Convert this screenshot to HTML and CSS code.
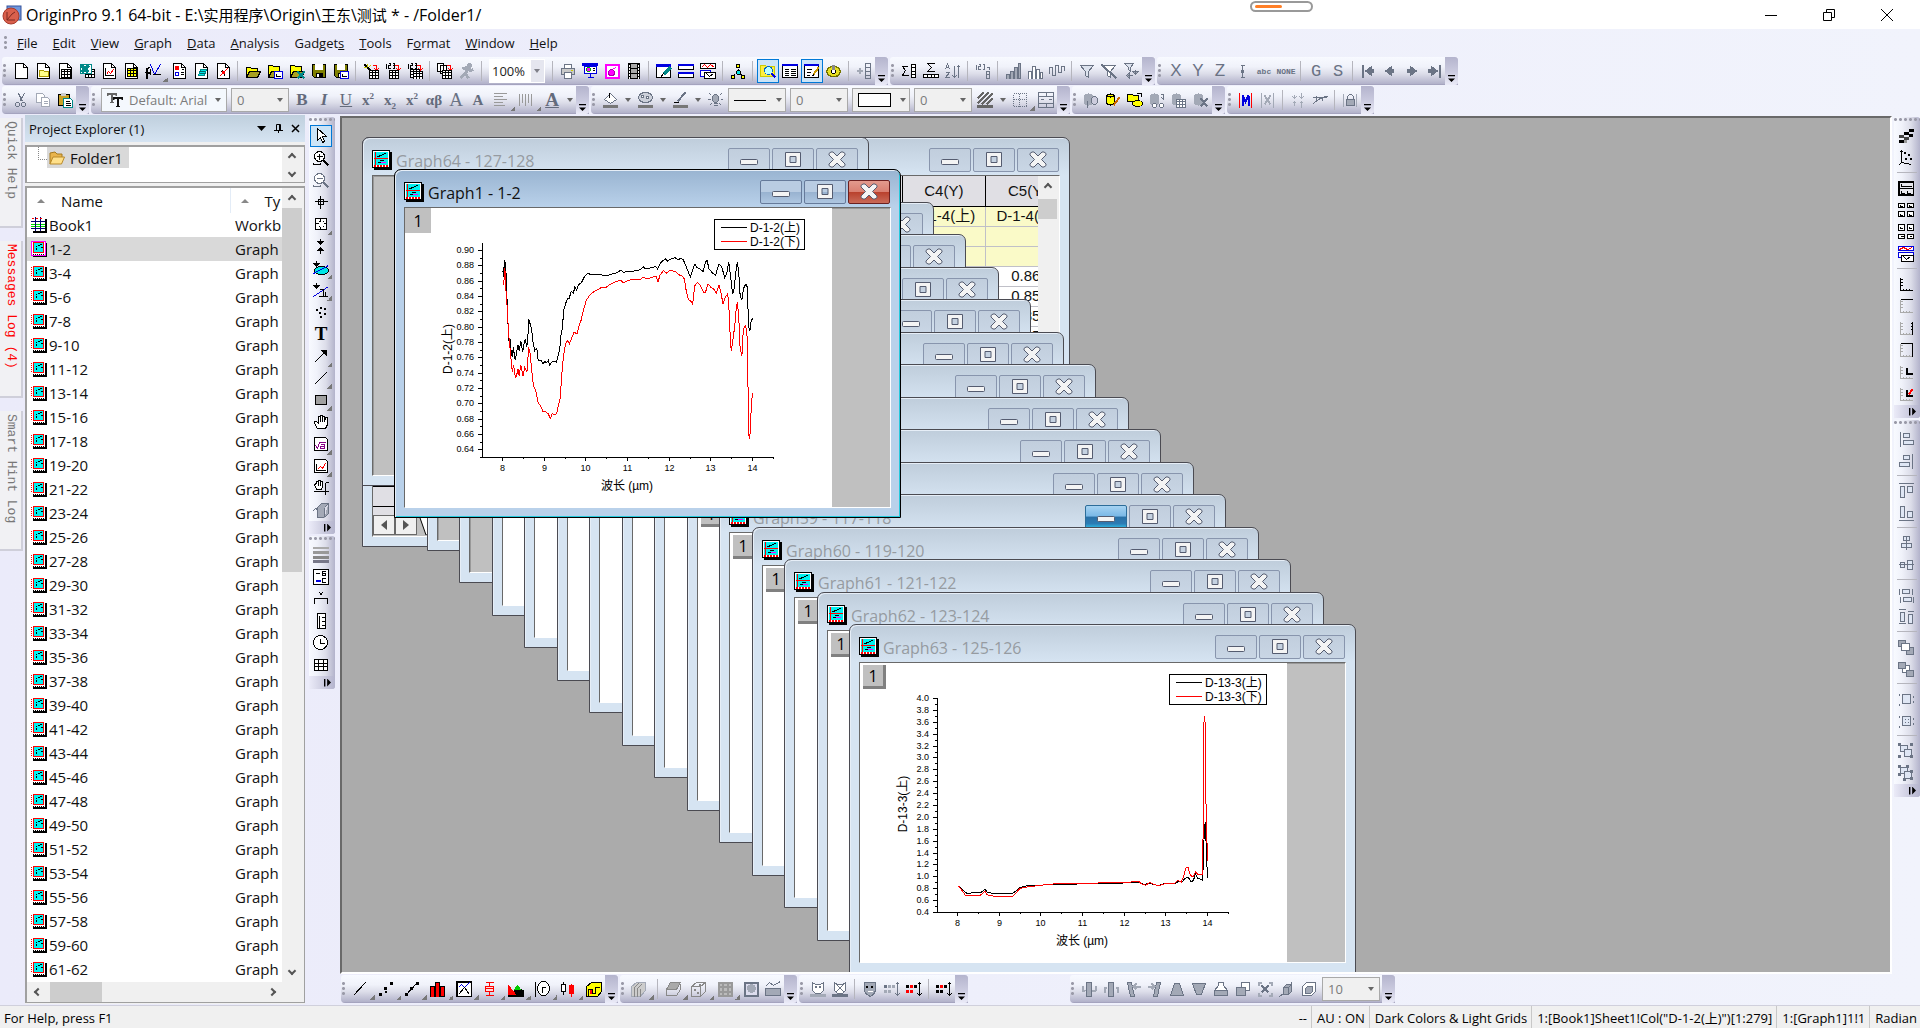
FILE: index.html
```html
<!DOCTYPE html>
<html lang="en">
<head>
<meta charset="utf-8">
<title>OriginPro 9.1 64-bit</title>
<link rel="stylesheet" href="styles.css">
</head>
<body>
<header class="titlebar">
  <svg class="app-icon" viewBox="0 0 20 20" width="20" height="20" aria-hidden="true">
    <rect x="5" y="1" width="14" height="14" fill="#6f97dc" stroke="#35539b"/>
    <circle cx="9" cy="11" r="8" fill="#d9604c" stroke="#a83a2c"/>
    <path d="M5 15L10 9L13 7M5 7V15H13" stroke="#7c2a22" fill="none"/>
  </svg>
  <h1>OriginPro 9.1 64-bit - E:\<span class="cjk">实用程序</span>\Origin\<span class="cjk">王东</span>\<span class="cjk">测试</span> * - /Folder1/</h1>
  <div class="pill"><i></i></div>
  <div class="sys">
    <button aria-label="Minimize"><svg viewBox="0 0 12 12"><path d="M0 6.5H12"/></svg></button>
    <button aria-label="Restore"><svg viewBox="0 0 12 12"><path d="M.5 3.5H8.500V11.500H.5ZM3.500 3V.5H11.500V8.500H9"/></svg></button>
    <button aria-label="Close"><svg viewBox="0 0 12 12"><path d="M0 0L12 12M12 0L0 12"/></svg></button>
  </div>
</header>
<nav class="menubar">
  <span class="grip"></span>
  <button><u>F</u>ile</button><button><u>E</u>dit</button><button><u>V</u>iew</button><button><u>G</u>raph</button><button><u>D</u>ata</button><button><u>A</u>nalysis</button><button>Gadget<u>s</u></button><button><u>T</u>ools</button><button>F<u>o</u>rmat</button><button><u>W</u>indow</button><button><u>H</u>elp</button>
</nav>
<div class="bar-row" id="row-standard"></div>
<div class="bar-row" id="row-format"></div>
<main>
  <div class="side-tabs">
    <button>Quick Help</button>
    <button class="alert">Messages Log (4)</button>
    <button>Smart Hint Log</button>
  </div>
  <aside class="explorer">
    <header>
      <h2>Project Explorer (1)</h2>
      <button aria-label="Menu"><svg viewBox="0 0 9 9"><path d="M0 2H9L4.500 7Z" fill="#000"/></svg></button>
      <button aria-label="Pin"><svg viewBox="0 0 9 9"><path d="M2.500 6V.5H6.500V6M5.500 1V6M0 6.500H9M4.500 7V9" stroke="#000" fill="none"/></svg></button>
      <button aria-label="Close"><svg viewBox="0 0 9 9"><path d="M1 1L8 8M8 1L1 8" stroke="#000" stroke-width="1.500" fill="none"/></svg></button>
    </header>
    <div class="box tree">
      <div class="tree-body">
        <span class="branch"></span>
        <button class="node"><svg viewBox="0 0 16 14" width="16" height="14"><path d="M1 13V2L6 1L8 3H13V6" fill="#e9b44c" stroke="#a67a1e"/><path d="M1 13L4 6H15.500L12.500 13Z" fill="#ffe08a" stroke="#b98a2a"/></svg>Folder1</button>
      </div>
      <div class="vscroll"><span class="up"></span><span class="down"></span></div>
    </div>
    <div class="box list">
      <div class="list-body">
        <table>
          <thead><tr><th><i></i>Name</th><th><i></i>Ty</th></tr></thead>
          <tbody id="files"></tbody>
        </table>
        <div class="vscroll"><span class="up"></span><div class="track"><div class="thumb"></div></div><span class="down"></span></div>
      </div>
      <div class="hscroll"><span class="left"></span><div class="thumb"></div><span class="right"></span></div>
    </div>
  </aside>
  <div class="dock" id="dock-tools"></div>
  <div class="work">
    <div class="work-top">
      <div class="mdi" id="mdi"></div>
      <div class="dock dock-right" id="dock-right"></div>
    </div>
    <div class="bar-row" id="row-plot"></div>
  </div>
</main>
<footer class="status">
  <span class="msg">For Help, press F1</span>
  <span>--</span><span>AU : ON</span><span>Dark Colors &amp; Light Grids</span><span>1:[Book1]Sheet1!Col("D-1-2(上)")[1:279]</span><span>1:[Graph1]1!1</span><span>Radian</span>
</footer>
<script src="icons.js"></script>
<script src="app.js"></script>
</body>
</html>
```
FILE: styles.css
```css
* { box-sizing: border-box; }
body {
  margin: 0; height: 100vh; display: flex; flex-direction: column; overflow: hidden;
  font: 13px/18px "Open Sans", "Noto Sans CJK SC", sans-serif; color: #111;
  background: linear-gradient(90deg, #ebebfa, #f1f3fc);
}
button { font: inherit; color: inherit; background: none; border: 0; padding: 0; margin: 0; }
svg { display: block; flex: none; }
h1, h2, h3 { margin: 0; font-weight: 400; }

.titlebar { flex: none; height: 29px; background: #fff; display: flex; align-items: center; padding-left: 2px; }
.titlebar h1 { font-size: 16px; line-height: 24px; margin-left: 4px; flex: 1; white-space: nowrap; color: #000; }
.titlebar .cjk { font-size: 15px; font-family: "Noto Sans CJK SC", sans-serif; }
.pill { width: 63px; height: 11px; border: 2px solid #999; border-radius: 6px; margin-right: 429px; align-self: flex-start; margin-top: 1px; padding: 2px 3px; background: #fff; }
.pill i { display: block; width: 27px; height: 3px; border-radius: 2px; background: #ff7f27; }
.sys { display: flex; padding-right: 4px; }
.sys button { width: 58px; height: 28px; display: grid; place-items: center; }
.sys svg { width: 12px; height: 12px; fill: none; stroke: #000; }

.menubar { flex: none; height: 28px; display: flex; align-items: center; padding-left: 3px; gap: 15px; }
.menubar button { line-height: 24px; }
.menubar .grip { margin-right: -9px; }

.grip { flex: none; width: 8px; align-self: stretch; background: radial-gradient(circle at 50% 50%, #9a9aa8 1px, transparent 2px) 0 6px / 5px 5px repeat-y; background-clip: content-box; padding: 6px 0; }
.bar-row { flex: none; height: 29px; display: flex; gap: 2px; padding-left: 2px; }
.toolbar { display: flex; align-items: center; height: 28px; border-radius: 3px 0 0 4px; background: linear-gradient(#f8faff, #f0f2fa 35%, #dcdde9 60%, #b3b3cb 95%, #9d9bb8); }
.toolbar button { flex: none; width: 22px; height: 24px; display: grid; place-items: center; color: #6a7284; }
.toolbar button svg { width: 16px; height: 16px; shape-rendering: crispEdges; }
.toolbar button.on, .dock button.on { background: #cce4f7; border: 1px solid #0078d7; }
.toolbar button.corner { width: 26px; padding-right: 4px; background: linear-gradient(135deg, transparent 50%, #777 50%) 21px 18px / 5px 5px no-repeat; }
.toolbar button.arrow { width: 13px; }
.toolbar button.arrow::before, .combo::after { content: ""; border: 3px solid transparent; border-top: 4px solid #666; border-bottom: 0; }
.toolbar .end { flex: none; align-self: stretch; width: 13px; background: linear-gradient(#b4b4cd, #c9c9de 50%, #ebebf8); border-radius: 0 3px 3px 0; display: grid; place-items: end center; padding-bottom: 3px; }
.toolbar .end::before { content: ""; width: 7px; height: 7px; clip-path: polygon(0 0, 100% 0, 100% 17%, 0 17%, 0 50%, 100% 50%, 50% 100%, 0 50%); background: #000; }
.sep { flex: none; width: 1px; height: 20px; margin: 0 4px 0 3px; background: #b5b5bd; }
.combo { flex: none; display: flex; align-items: center; height: 24px; margin: 0 2px; padding: 0 5px; background: #f0f0f0; border: 1px solid #a9a9a9; color: #7b7b7b; gap: 4px; width: 58px; position: relative; }
.combo select { appearance: none; font: inherit; color: inherit; background: none; border: 0; padding: 0; margin: 0; min-width: 0; flex: 1; width: 0; outline: 0; }
.combo.font { width: 126px; background: #f4f8fd; gap: 6px; }
.combo.zoom { width: 56px; background: #fff; border-color: #fff; color: #222; margin: 0 4px 0 3px; padding: 0 0 0 2px; gap: 0; }
.combo.zoom::after { margin: 0 4px; border-top-color: #000; }
.combo.zoom::before { content: ""; position: absolute; right: 0; top: 0; bottom: 0; width: 13px; background: #d4d5e4; opacity: 0.600; }
.bold { font: 700 17px "Liberation Serif", serif; }
.ital { font: italic 700 17px "Liberation Serif", serif; }
.undl { font: 17px "Liberation Serif", serif; text-decoration: underline; }
.serif { font: 700 15px "Liberation Serif", serif; }
.big { font: 700 19px "Liberation Serif", serif; }
.large { font: 19px "Liberation Serif", serif; }
.axis { font: 17px "Liberation Sans", sans-serif; }
.mono { font: 17px "Liberation Mono", monospace; }
.tiny { font: 700 8px "Liberation Mono", monospace; }
.toolbar button.big, .toolbar button.bold, .toolbar button.ital, .toolbar button.undl, .toolbar button.serif { color: #646b7c; }
.toolbar button.text-tool { color: #000; }
.toolbar sup, .toolbar sub { font-size: 9px; line-height: 0; }
.push { margin-left: 100px; }

main { flex: 1; min-height: 0; display: flex; }
.side-tabs { flex: none; width: 25px; padding-top: 3px; display: flex; flex-direction: column; align-items: flex-start; gap: 13px; }
.side-tabs button { writing-mode: vertical-rl; width: 23px; height: 110px; padding: 3px 0; text-align: left; line-height: 18px; background: #f1f1f4; border: solid #cfcfda; border-width: 0 2px 2px 0; font-family: "Liberation Mono", monospace; color: #777; }
.side-tabs button.alert { height: 157px; color: #f00; }
.side-tabs button:last-child { height: 140px; }

.explorer { flex: none; width: 280px; display: flex; flex-direction: column; gap: 3px; background: #f0f0f0; padding-bottom: 1px; }
.explorer > header { display: flex; align-items: center; height: 27px; padding: 0 5px 0 4px; gap: 8px; background: linear-gradient(#bfcfdd, #d6e4f2); }
.explorer h2 { flex: 1; font-size: 13px; line-height: 18px; }
.explorer > header svg { width: 9px; height: 9px; }
.box { background: #fff; border: 2px solid #a0a0a0; border-right-width: 1px; border-bottom-width: 1px; }
.tree { height: 38px; display: flex; }
.tree-body { flex: 1; display: flex; align-items: flex-start; }
.branch { width: 9px; height: 13px; margin-left: 11px; border: dotted #888; border-width: 0 0 1px 1px; }
.node { display: flex; align-items: center; gap: 5px; height: 21px; padding: 0 6px 0 2px; background: #d9d9d9; font-size: 15px; }
.vscroll { flex: none; width: 22px; padding-right: 2px; background: #f0f0f0; display: flex; flex-direction: column; justify-content: space-between; align-items: center; }
.up, .down, .left, .right { width: 6px; height: 6px; border: solid #555; border-width: 2px 0 0 2px; }
.up { transform: rotate(45deg); margin-top: 8px; }
.down { transform: rotate(225deg); margin-bottom: 8px; }
.left { transform: rotate(-45deg); }
.right { transform: rotate(135deg); }
.tree .up { margin-top: 7px; }
.tree .down { margin-bottom: 6px; }
.list { flex: 1; min-height: 0; display: flex; flex-direction: column; }
.list-body { flex: 1; min-height: 0; display: flex; overflow: hidden; }
.list-body table { flex: 1; align-self: flex-start; border-collapse: collapse; table-layout: fixed; width: 255px; font-size: 15px; line-height: 24px; }
.list-body th { font-weight: 400; text-align: left; height: 25px; padding: 0; overflow: hidden; }
.list-body th:first-child { width: 203px; border-right: 1px solid #e3ecf7; }
.list-body th i { display: inline-block; border: 4px solid transparent; border-top: 0; border-bottom-color: #888; margin: 0 16px 4px 10px; }
.list-body td { height: 24px; padding: 0 0 0 5px; white-space: nowrap; overflow: hidden; }
.list-body td:first-child { padding-left: 4px; }
.list-body td span { display: flex; align-items: center; gap: 2px; }
.list-body td svg { shape-rendering: crispEdges; }
.list-body tr.sel { background: #d9d9d9; }
.list .track { flex: 1; align-self: stretch; margin-top: 6px; }
.list .vscroll .thumb { height: 364px; background: #cdcdcd; }
.hscroll { flex: none; height: 20px; background: #f0f0f0; display: flex; align-items: center; padding: 0 29px 0 8px; }
.hscroll .thumb { width: 52px; height: 20px; background: #cdcdcd; margin: 0 auto 0 9px; }

.dock { flex: none; width: 34px; padding: 2px 2px 0 4px; display: flex; flex-direction: column; gap: 2px; }
.dock .toolbar { flex-direction: column; width: 26px; height: auto; border-radius: 3px; background: linear-gradient(90deg, #f8faff, #f0f2fa 30%, #dcdde9 65%, #b3b3cb); }
.dock .grip { width: auto; height: 8px; background: radial-gradient(circle at 50% 50%, #9a9aa8 1px, transparent 2px) 4px 0 / 5px 5px repeat-x; padding: 0 4px; }
.dock .toolbar button, .dock .toolbar button.corner { width: 22px; height: 22px; padding: 0; margin-right: 2px; background-position: 17px 17px; }
.dock .sep { width: 20px; height: 1px; margin: 3px 0 4px; }
.dock .toolbar .end { width: auto; height: 13px; background: linear-gradient(90deg, #ebebf8, #b4b4cd); display: flex; justify-content: flex-end; align-items: center; padding: 0 4px 0 0; }
.dock .toolbar .end::before { width: 7px; height: 8px; clip-path: polygon(0 0, 20% 0, 20% 100%, 45% 100%, 45% 0, 100% 50%, 45% 100%, 0 100%); }
.dock-right { width: 28px; padding: 2px 0 0 2px; }

.work { flex: 1; min-width: 0; display: flex; flex-direction: column; }
.work-top { flex: 1; min-height: 0; display: flex; }
.mdi { flex: 1; min-width: 0; position: relative; overflow: hidden; background: #ababab; border: 2px solid #696969; border-right-color: #fff; border-bottom-color: #fff; margin: 1px 0 0 1px; }
.work > .bar-row { height: 30px; padding-top: 1px; }

.win { position: absolute; width: 507px; height: 349px; display: flex; flex-direction: column; padding: 0 9px 9px; border: 1px solid #4b4b52; border-radius: 7px 7px 0 0; background: linear-gradient(#bfcddb, #d6e4f2 37px); box-shadow: inset 1px 1px #e6eef7; }
.win > header { flex: none; height: 37px; padding-right: 1px; display: flex; align-items: center; gap: 2px; }
.win > header > svg { shape-rendering: crispEdges; margin: 6px 2px 0 0; }
.win h3 { flex: 1; font-size: 16px; line-height: 22px; margin-top: 8px; color: #969ba1; white-space: nowrap; }
.win > header button { width: 42px; height: 24px; margin-top: 6px; display: grid; place-items: center; border: 1px solid #8895ad; border-radius: 2px; background: linear-gradient(#c1cedd, #c9d6e5); }
.win.book { width: 708px; height: 410px; }
.win.active { border-color: #000; background: linear-gradient(#99b4d1, #b9d1ea 37px); box-shadow: inset 1px 1px #e6eef7, inset -1px -1px #25c9dc; }
.win.active h3 { color: #111; }
.win.active > header button { border-color: #667a9a; background: linear-gradient(#b9cce2 50%, #98b2d0 50%, #aec6e0); }
.win.active > header button:last-child { border-color: #6b2020; background: linear-gradient(#e29a8d, #d98072 48%, #b9402c 50%, #c96a58); }
.win > header button.hot { border-color: #2d6d99; background: linear-gradient(#a6d3f2, #7ab8e6 46%, #2a70a6 50%, #2c7cb4 80%, #30bfe8); }
.client { flex: 1; min-height: 0; display: flex; position: relative; overflow: hidden; background: #c0c0c0; border: 1px solid #696969; border-right-color: #fff; border-bottom-color: #fff; box-shadow: inset 1px 1px #999; }
.page { background: #fff; width: 427px; height: 100%; }
.page text { font-family: "Liberation Sans", "Noto Sans CJK SC", sans-serif; font-size: 12px; }
.page .tick { font-size: 9px; }
.layer { position: absolute; left: 3px; top: 2px; width: 23px; height: 24px; background: #c0c0c0; border: solid #808080; border-width: 0 3px 3px 0; font: 16px/20px "Open Sans", sans-serif; color: #000; }
.active .layer { left: 0; top: 0; width: 26px; height: 25px; border: 0; }

.sheet { flex: 1; min-width: 0; display: flex; flex-direction: column; background: #c0c0c0; }
.sheet-view { flex: 1; min-height: 0; overflow: hidden; background: #fff; }
.sheet table { border-collapse: collapse; table-layout: fixed; width: 697px; font: 15px/18px "Liberation Sans", "Noto Sans CJK SC", sans-serif; }
.sheet th { font-weight: 400; background: #e0dfe4; height: 30px; border: solid #000; border-width: 0 1px 1px 0; padding: 0; }
.sheet th:first-child { width: 529px; }
.sheet td { height: 20px; padding: 0 9px; text-align: center; border: 1px solid #c0c0c8; overflow: hidden; white-space: nowrap; }
.sheet tbody th { height: 20px; }
.sheet .meta td { background: #fafac8; }
.sheet td.num { text-align: left; padding-left: 25px; }
.sheet-nav { flex: none; height: 21px; display: flex; }
.sheet-nav button { width: 22px; height: 20px; background: #f0f0f0; border: 1px solid #696969; display: grid; place-items: center; }
.book .vscroll { width: 21px; justify-content: flex-start; }
.book .vscroll .thumb { width: 19px; height: 20px; margin-top: 9px; background: #cdcdcd; }

.status { flex: none; height: 23px; margin-top: 1px; display: flex; background: #f0f0f0; border-top: 1px solid #d0d0dc; line-height: 24px; padding-right: 1px; color: #000; }
.status span { padding: 0 2px 0 5px; border-left: 1px solid #c8c8c8; margin-left: 2px; white-space: nowrap; }
.status .msg { flex: 1; margin: 0; border: 0; padding-left: 4px; }
.status .msg + span { border: 0; }
```
FILE: icons.js
```js
// Toolbar glyphs on a 16-unit grid; strokes sit on integer coordinates.
const K = '#000', G = '#6b7485', L = '#a3a9b6', W = '#fff', Y = '#ffff00', B = '#0000e0', RD = '#f00', C = '#00e5e5';
const P = (d, s = K, f = 'none', w = 1) => `<path d="${d}" stroke="${s}" fill="${f}" stroke-width="${w}"/>`;
const R = (x, y, w, h, f) => `<rect x="${x - 0.5}" y="${y - 0.5}" width="${w}" height="${h}" fill="${f}"/>`;
const O = (x, y, rx, ry, s = K, f = 'none') => `<ellipse cx="${x}" cy="${y}" rx="${rx}" ry="${ry}" stroke="${s}" fill="${f}"/>`;
const doc = P('M2 0H10L14 4V15H2Z', K, W) + P('M10 0V4H14');
const grid = (x, y, s = K, f = W) => P(`M${x} ${y}h9v8h-9zM${x} ${y + 2}h9M${x} ${y + 5}h9M${x + 3} ${y}v8M${x + 6} ${y}v8`, s, f);
const folder = (y = 4) => P(`M1 14V${y}H5L6 ${y + 1}H12V8`, K, Y) + P('M1 14L4 8H15L12 14Z', K, '#a8a020');
const disk = P('M1 1H14V14H3L1 12Z', K, '#808000') + R(4, 1, 8, 6, W) + R(5, 10, 7, 5, K) + R(6, 11, 2, 3, W);
const arrowR = P('M9 2H13V6M11 5L13 7L15 5', RD);
const cyl = c => P('M1 3Q5 0 9 3V11Q5 14 1 11Z', c, c === K ? Y : L) + P('M1 3Q5 6 9 3', c);
const bars = (s, f) => P('M1 15V11H4V15M5 15V8H8V15M9 15V4H12V15M13 15V0H15V15Z', s, f);
const mag = c => O(6, 6, 5, 5, c, W) + P('M10 10L15 15', c, 'none', 2) + P('M3 6H9', c);
const corner = P('M2 1V14H14', '#aaa') + P('M2 3h2M2 6h2M2 9h2M5 14v-2M8 14v-2M11 14v-2', '#aaa');
const rects = (a, b, extra = '', f = '#dfe6f4') => P(`M${a}`, G, f, 1) + P(`M${b}`, G, f, 1) + (extra ? P(extra, G) : '');

const ICONS = {
  newDoc: doc,
  newFolder: doc + P('M4 13V7H8L9 8H13V13Z', '#a90', '#ff8'),
  newBook: doc + grid(4, 6),
  newExcel: grid(6, 6) + P('M1 1H12V10H1Z', '#088', W) + P('M2 2L9 9M9 2L2 9', '#088', 'none', 3),
  newGraph: doc + P('M4 4V12H12') + P('M5 11L7 8L9 10L12 6', RD),
  newMatrix: doc + grid(4, 5, K, Y),
  newFunc: P('M4 5Q1 4 1 9V15M0 9H4', K, 'none', 2) + P('M5 1L9 11L15 1', B) + P('M7 11H15M5 5v6'),
  newLayout: doc + R(4, 3, 4, 4, RD) + P('M4 9H7V12H4Z', B) + P('M9 9H12M9 11H12M10 6H12'),
  newNotes: doc + P('M5 12L7 6H13L11 12Z', '#088', C) + P('M6 8H11M6 10H11', '#066'),
  newDigit: doc + P('M4 13L12 5', RD) + P('M7 10V6M5 8H9M9 12V8') + R(7, 8, 3, 3, RD),
  open: folder(),
  openTpl: folder(2) + P('M7 8H15V15H7Z', B, W) + P('M9 10V13H13'),
  openXls: folder(2) + P('M8 8L15 15M15 8L8 15', '#088', 'none', 2),
  save: disk,
  saveTpl: disk + P('M7 8H15V15H7Z', B, W) + P('M9 10V13H13'),
  wizard: P('M1 1L8 8', K, 'none', 2) + P('M4 0V3M0 4H3M7 2L5 4', '#cc0') + arrowR + grid(6, 7),
  imp1: P('M1 0V5M3 0H5V2H3V5H5M7 0H9V5H7M7 2H9') + arrowR + grid(4, 7),
  impN: P('M1 0V5M3 0H5V2H3V5H5M7 0H9V5H7M7 2H9') + arrowR + grid(3, 6) + grid(6, 8),
  batch: P('M0 0H6V8H0ZM3 2H9V10H3Z', K, W) + arrowR + grid(5, 7),
  run: O(10, 2, 2, 2, L, L) + P('M3 5L8 4L11 7L14 6M8 5L6 10L9 15M6 10L1 14', L, 'none', 3),
  print: P('M4 5V1H11V5', G, W) + P('M1 5H14V11H1Z', G, '#c9c9c9') + P('M4 9H11V15H4Z', G, W) + R(11, 7, 2, 1, '#cc0'),
  slide: R(0, 0, 16, 3, B) + P('M2 3H14V10H2ZM8 10V13M5 14H11', B, W) + O(6, 6, 2, 2, '#0a0', '#f0f') + P('M10 5H12M10 7H12', K),
  layoutV: P('M1 1H14V14H1Z', '#f0f', W, 2) + O(7, 9, 3, 3, '#a0a', '#f0f') + P('M9 5L12 4', '#f0f'),
  movie: R(2, 0, 12, 16, K) + R(5, 1, 6, 4, '#aaa') + R(5, 6, 6, 4, '#aaa') + R(5, 11, 6, 4, '#aaa') + P('M3 1V15M12 1V15', W, 'none', 1).replace('/>', ' stroke-dasharray="2 1"/>'),
  edit: P('M0 1H14V14H0Z', K, W) + R(0, 1, 15, 3, B) + P('M14 4L7 11', '#088', 'none', 3) + P('M7 10L4 14'),
  winTop: P('M0 1H15V6H0ZM0 9H15V14H0Z', K, W) + R(0, 1, 16, 2, B) + R(0, 9, 16, 2, B),
  winWave: P('M0 0H15V5H0Z', K, W) + P('M1 4L4 1L7 4L10 1L14 4', RD) + P('M0 7H10V13H0Z', B, W) + P('M4 9H15V15H4Z', K, W) + P('M6 10L9 13L13 10'),
  tree: P('M6 1H9V4H6ZM1 12H4V15H1ZM11 12H14V15H11Z', K, Y) + P('M8 5V7M5 11L3 12M10 11L12 12') + O(8, 9, 2, 2, K, C),
  explorer: P('M0 2H5L6 3H14V13H0Z', '#cc0', '#ffee40') + O(8, 7, 4, 4, '#06c', '#bff') + P('M11 10L15 14', B, 'none', 2),
  results: P('M0 1H15V14H0Z', K, W) + R(0, 1, 16, 2, B) + P('M2 6H6M2 8H6M2 10H6M8 6H13M8 8H13M8 10H13M2 12H6M8 12H13'),
  script: P('M0 1H14V14H0Z', K, W) + R(0, 1, 15, 2, B) + P('M2 6H7M2 9H6M2 12H5') + P('M14 4L9 11', '#c90', 'none', 2) + P('M8 13L9 11'),
  gear: O(7, 8, 7, 5, '#770', '#e8e020') + P('M1 5V11M13 5V11M3 13H11', '#660').replace('/>', ' stroke-dasharray="2 1"/>') + O(7, 8, 2, 2, K, W) + P('M7 1V6', '#888', 'none', 3),
  addCol: P('M0 7H6M3 4V10', L, 'none', 2) + P('M9 0H14V15H9ZM9 4H14M9 8H14M9 12H14', G),
  sumCol: P('M6 3H1L4 7L1 12H7', K) + P('M10 1H14V14H10ZM10 4H14M10 8H14M10 11H14', K, W),
  sumRow: P('M11 0H4L8 4L4 8H11', K) + P('M0 11H15V14H0ZM4 11V14M8 11V14M11 11V14', K, W),
  sortAZ: P('M0 6L2 0L4 6M1 4H3M0 9H4L0 14H4M9 2V14M7 12L9 14L11 12M13 14V2M11 4L13 2L15 4', G),
  rank: P('M1 1V6M3 1H5V3H3V6H5M7 1H9V6H7M11 4H14V6M12 8V7', G) + P('M11 8H14V15H11ZM11 11H14', G),
  stat1: bars(G, L), stat2: P('M1 15V8H4V15M5 15V3H8V15M9 15V6H12V15M13 15V9H15V15Z', G, W), stat3: P('M0 10V4H3V12H6V2H9V9H12V3H15V7', G),
  filter: P('M1 2H14L9 8V14L6 12V8Z', G, '#dde3ee'),
  filterOff: P('M1 2H14L9 8V14L6 12V8Z', G, W) + P('M0 1L15 15', G, 'none', 2),
  filterGo: P('M1 0H10L7 4V8L5 6V4Z', G, '#dde3ee') + P('M12 6V10M15 8L12 11L9 8ZM4 12H9M6 9L3 12L6 15Z', G, L),
  errBar: P('M8 2V14M6 2H10M6 14H10', G, 'none', 1) + R(7, 7, 3, 3, G),
  first: P('M2 1V14', G, 'none', 2) + P('M11 3V12L5 7.500Z', G, G) + R(10, 6, 4, 4, G),
  prev: P('M9 3V12L3 7.500Z', G, G) + R(8, 6, 4, 4, G),
  next: P('M6 3V12L12 7.500Z', G, G) + R(3, 6, 4, 4, G),
  last: P('M13 1V14', G, 'none', 2) + P('M5 3V12L11 7.500Z', G, G) + R(2, 6, 4, 4, G),
  cut: P('M5 1L9 9M11 1L6 9', G) + O(4, 12, 2, 2, G) + O(10, 12, 2, 2, G),
  copy: P('M1 1H7L9 3V10H1Z', L, W) + P('M6 5H12L14 7V14H6Z', L, W) + P('M8 9H12M8 11H12', L),
  paste: P('M1 2H12V13H1Z', K, '#c9a227') + R(4, 1, 5, 3, '#ccc') + P('M6 6H13L15 8V15H6Z', '#088', W) + P('M8 9H12M8 11H13M8 13H13', K),
  align: P('M1 1H14M1 4H10M1 7H14M1 10H10M1 13H12', '#999'),
  valign: P('M1 1V13M4 1V10M7 1V13M10 1V10M13 1V13', '#999'),
  fill: P('M2 7L8 1L14 7L8 11Z', G, W) + P('M7 0V5') + R(1, 13, 15, 3, '#777'),
  palette: O(8, 5, 7, 5, G, '#ccd0da') + O(5, 4, 1, 1, G, W) + O(10, 5, 1, 1, G, W) + R(1, 13, 15, 3, '#777'),
  pen: P('M13 0L5 9', G, 'none', 2) + P('M1 10H6') + R(1, 13, 15, 3, '#777'),
  bulb: O(8, 6, 3, 4, G, L) + P('M6 11H10M6 13H10M0 7H3M13 7H15M2 1L4 3M14 1L12 3M2 13L4 11M14 13L12 11', G),
  hatch: P('M0 6L6 0M0 11L11 0M4 12L15 1M9 12L15 6', '#666', 'none', 2) + R(0, 13, 16, 3, '#666'),
  dotGrid: P('M1 1H14V14H1ZM1 7H14M7 1V14', G).replace('/>', ' stroke-dasharray="1 1"/>'),
  cellGrid: P('M0 0H15V15H0ZM0 4H15M0 11H15M8 0V4M8 11V15M2 7H5M10 7H13', G),
  db1: cyl(L) + O(11, 8, 3, 4, G, '#ccd') + P('M4 8V15', G),
  db2: cyl(K) + P('M14 5L8 13', '#c60', 'none', 2),
  db3: P('M0 9V2H5L6 3H11V9Z', K, Y) + P('M9 1H14V4') + O(10, 11, 5, 3, K, Y),
  db4: cyl(L) + P('M11 2H14V7M12 5L14 7', G) + O(5, 13, 2, 2, G, W) + O(12, 13, 2, 2, G, W),
  db5: cyl(L) + grid(5, 7, G),
  db6: cyl(L) + P('M7 6L14 14M14 6L7 14', G, 'none', 2),
  mMark: P('M1 0V15M13 0V15', RD) + P('M4 13V3L7 9L10 3V13', B, 'none', 2),
  mClear: P('M1 0V15M13 0V15', L) + P('M4 3L10 12M10 3L4 12', L, 'none', 2),
  spread: P('M4 2V6M2 4L4 6L6 4M4 13V9M2 11L4 9L6 11M11 0V6M9 4L11 6L13 4M11 15V9M9 11L11 9L13 11', L),
  cross2: P('M0 5H14M0 12Q8 4 15 4M4 3V7M10 8V4', G),
  lock: P('M1 1V14M14 1V14', L) + P('M5 7V4Q8 0 11 4V7', G) + P('M4 7H12V13H4Z', G, L),

  pointer: P('M4 0V12L7 9L9 14L11 13L9 8H13Z', K, W),
  zoomIn: mag(K) + P('M6 3V9M0 12V14H7V12M3 13V14'),
  zoomOut: mag(G) + P('M0 12V14H7V12M3 13V14', G),
  reader: P('M7 1V14M1 7H14M5 5H10V10H5Z'),
  selector: P('M2 2H13V13H2ZM7 2V5M7 10V13M2 7H5M10 7H13M5 5H6M9 5H10M5 10H6M9 10H10', K, W),
  range: P('M7 0V5M7 15V10') + P('M4 3H10L7 6ZM4 12H10L7 9Z', K, K),
  mask: P('M3 0V3') + P('M0 3H6L3 6Z', K, K) + O(8, 10, 7, 4, K, C) + P('M0 13L15 5', B),
  dataRect: P('M3 0V3') + P('M0 3H6L3 6Z', K, K) + P('M0 14L15 4', B) + P('M6 7H10V13M5 14H14M12 9V13'),
  dots: R(3, 5, 2, 2, K) + R(7, 3, 2, 2, K) + R(6, 8, 2, 2, K) + R(11, 4, 2, 2, K) + R(11, 9, 2, 2, K) + R(7, 12, 2, 2, K),
  arrowLine: P('M1 14L11 4') + P('M8 2H13V7Z', K, K),
  line: P('M1 14L13 2'),
  rectTool: P('M2 3H13V12H2Z', K, '#a0a0a0'),
  hand: P('M4 14L1 9V7H3L5 9V2H7V7V1H9V7V2H11V7L12 3H14V10L12 14Z', K, W),
  formula: P('M1 1H12L14 3V14H1Z', K, W) + P('M2 9L4 12L6 6H12M7 8H11V12H7V10H11', '#808'),
  graphTool: P('M1 1H12L14 3V14H1Z', K, W) + P('M3 5V12H12') + P('M4 11L7 8L9 10L12 5', RD),
  rescale: P('M3 9L1 4L3 3V1H5V5V0H7V5V1H9V6L8 9Z', K, W) + P('M0 11H15M12 2V14M12 2H15'),
  cube: P('M4 5H11V15H4Z', G, L) + P('M4 5L8 1H15L11 5M15 1V11L11 15', G, L) + P('M0 9Q1 5 4 7', G),
  lineW: R(0, 0, 16, 2, '#aaa') + R(0, 4, 16, 3, '#999') + R(0, 9, 16, 3, '#888') + R(0, 13, 16, 3, '#778'),
  legend: P('M0 0H15V15H0Z', K, W) + P('M2 4H6M9 2V6H12V4H9V2H12') + P('M2 11H7', B, 'none', 2) + P('M12 9H9V13H12'),
  bracket: P('M1 12V7H14V12M6 1L9 4M9 1L6 4'),
  scale: P('M4 0H12V15H4Z', K, W) + P('M6 2V14M8 4H11M8 8H11M8 12H11'),
  clock: O(7, 7, 7, 7, K, W) + P('M7 3V8H11'),
  table: P('M1 2H14V13H1ZM1 6H14M1 9H14M5 2V13M10 2V13', K, W),

  surf: P('M10 2H15', K, 'none', 3) + P('M5 5H10M10 7H14', K, 'none', 3) + P('M0 8H5M5 10H10', '#444', 'none', 3) + P('M0 13H5', K, 'none', 3) + P('M5 13H8', '#999', 'none', 3),
  axes3: P('M3 0V12L13 14M3 12L0 15M1 2L3 0L5 2') + R(6, 2, 2, 2, K) + R(10, 4, 2, 2, K) + R(7, 8, 2, 2, K) + R(12, 8, 2, 2, K),
  lay1: P('M0 1H15V14H0Z', K, '#e8e8ee', 2) + P('M3 3V6H13M1 8H15M3 10V13H6M9 10V13H12'),
  lay2: P('M0 1H6V5H0ZM9 1H15V5H9ZM0 9H6V14H0ZM9 9H15V14H9Z', K, W) + P('M2 2V4H4M11 2V4H13M2 11V13H4M11 11V13H13'),
  lay4: P('M0 0H6V6H0ZM9 0H15V6H9ZM0 10H6V14H0ZM9 10H15V14H9Z', K, W) + P('M2 2V4H4M11 2V4H13M2 12H5M11 12H13'),
  lay6: P('M0 0H15V4H0Z', B, W) + P('M1 3L5 1L9 3L14 1', RD) + P('M0 6H15V11H0Z', B, W) + P('M3 9H15V15H3Z', K, W) + P('M5 10L8 13L12 10'),
  ax1: P('M2 1V14H14') + P('M2 3h2M2 6h2M2 9h2M5 14v-2M8 14v-2M11 14v-2'),
  ax2: corner + P('M2 1H14'), ax3: corner + P('M14 1V14M14 3h-2M14 6h-2M14 9h-2'), ax4: corner + P('M2 1H14V14'),
  ax5: corner + P('M8 3V9H14', K, 'none', 2), ax6: corner + P('M8 3V9H14', K, 'none', 2) + P('M10 8L14 3', RD, 'none', 2),
  al1: rects('5 2H11V6H5Z', '5 9H15V13H5Z', 'M2 0V15'), al2: rects('5 2H11V6H5Z', '1 9H11V13H1Z', 'M14 0V15'),
  al3: rects('2 3H6V14H2Z', '9 3H14V9H9Z', 'M0 0H15'), al4: rects('2 1H6V12H2Z', '9 6H14V12H9Z', 'M0 15H15'),
  al5: rects('5 1H11V5H5Z', '3 8H13V12H3Z', 'M8 0V14'), al6: rects('2 5H6V10H2Z', '9 3H14V12H9Z', 'M0 7H15'),
  al7: rects('4 2H11V6H4Z', '5 10H13V14H5Z', 'M1 1V7M14 1V7M2 9V15M15 9V15'), al8: rects('2 3H6V12H2Z', '10 5H14V14H10Z', 'M0 0H7M0 14H7M9 2H15'),
  al9: P('M0 1H7V7H0ZM8 8H15V15H8Z', G, L) + P('M3 4H11V11H3Z', G, W), al10: P('M4 4H11V11H4Z', G, W) + P('M0 1H7V7H0ZM8 9H15V15H8Z', G, L),
  al11: rects('4 3H12V12H4Z', '4 3H12', 'M1 2V4M1 12V14M15 4V6M15 9V11'), al12: rects('4 3H12V12H4Z', '6 6H7M9 6H10M6 9H7M9 9H10', 'M1 2V4M1 12V14M15 4V6M15 9V11'),
  al13: rects('2 2H9V8H2Z', '6 6H13V13H6Z') + R(0, 0, 3, 3, G) + R(12, 0, 3, 3, G) + R(0, 12, 3, 3, G) + R(12, 12, 3, 3, G),
  al14: rects('2 2H9V8H2Z', '6 6H13V13H6Z') + R(0, 0, 3, 3, G) + R(8, 0, 3, 3, G) + R(0, 8, 3, 3, G) + R(12, 5, 3, 3, G) + R(5, 13, 3, 3, G) + R(12, 12, 3, 3, G),

  pLine: P('M1 14L13 1'), pDots: R(1, 12, 3, 3, K) + R(6, 6, 3, 3, K) + R(7, 10, 2, 2, K) + R(12, 1, 3, 3, K),
  pLineDot: P('M1 14L13 1') + R(1, 12, 3, 3, K) + R(6, 6, 3, 3, K) + R(12, 1, 3, 3, K),
  pBar: P('M0 15V5H4V15M5 15V1H9V15M10 15V5H14V15Z', K, RD),
  pBox: P('M0 0H15V15H0Z', K, W, 2) + P('M2 6L5 3L8 6L13 1', B) + P('M2 13L8 6L13 13'),
  pErr: P('M7 1V5M3 1H11M7 10V14M3 14H11M3 5H11V10H3ZM3 7H11', RD, '#fdd'),
  pArea: P('M0 15V5L5 10L8 7L15 9V15Z', K, K) + P('M0 13V4L7 13Z', RD, RD) + P('M6 8L9 4L12 8Z', '#0c0', '#0c0'),
  pPolar: O(9, 7, 6, 7, K, W) + P('M1 0V15M8 11V5M8 6H11'),
  pCandle: P('M3 0V3M3 10V13M1 3H5V10H1Z', K, W) + P('M11 2V15M9 4H13V12H9Z', RD, RD),
  p3d: P('M0 5L5 1H15V10L11 15H0Z', K, Y) + P('M2 14V8H6V12H9V6H13') + R(4, 9, 2, 4, RD),
  g3a: P('M0 5L5 1H14V9L9 15H0Z', L, '#ccc') + P('M3 15V6L7 2M6 15V7L10 3M9 15V7', '#888'),
  g3b: P('M1 8L5 1H15L11 8Z', '#888', '#aaa') + P('M1 8V14H11L15 8V2', '#888'),
  g3c: P('M0 5L5 1H14V10L9 15H0ZM0 5H9V15M9 5L14 1', '#888') + R(3, 8, 2, 2, '#888') + R(6, 11, 2, 2, '#888') + R(8, 3, 2, 2, '#888'),
  g3d: P('M1 1H14V14H1ZM1 5H14M1 10H14M5 1V14M10 1V14', '#999', '#bbb', 2),
  g3e: P('M1 1H14V14H1Z', G, '#dde', 2) + O(8, 7, 4, 4, L, L), g3f: P('M0 5L4 1L8 4L15 0', G) + R(0, 7, 16, 8, L) + P('M0 7H15V14H0Z', G),
  m1: P('M2 1L5 3H10L13 1V9L10 12H5L2 9Z', G, W) + R(5, 5, 2, 2, G) + R(9, 5, 2, 2, G) + R(0, 13, 16, 3, L),
  m2: P('M2 1L5 3H10L13 1V9L10 12H5L2 9Z', G, W) + P('M3 2L12 11M12 2L3 11', G) + R(0, 13, 16, 3, G),
  m3: P('M2 1H13V9Q12 13 8 15Q3 13 2 9Z', G, L) + R(4, 5, 2, 2, K) + R(9, 5, 2, 2, K) + P('M5 10H10', W),
  m4: R(0, 4, 3, 3, G) + R(4, 4, 3, 3, L) + R(8, 4, 3, 3, L) + R(0, 9, 3, 3, L) + R(4, 9, 3, 3, L) + P('M13 1V14M11 3L13 1L15 3M11 12L13 14L15 12', G),
  m5: R(0, 4, 3, 3, K) + R(4, 4, 3, 3, RD) + R(8, 4, 3, 3, K) + R(0, 9, 3, 3, RD) + R(4, 9, 3, 3, RD) + P('M13 1V14M11 3L13 1L15 3M11 12L13 14L15 12'),
  m6: R(0, 4, 3, 3, K) + R(4, 4, 3, 3, RD) + R(8, 4, 3, 3, K) + R(0, 9, 3, 3, K) + R(4, 9, 3, 3, K) + P('M13 1V14M11 3L13 1L15 3M11 12L13 14L15 12'),
  r1: P('M5 1H10V15H5Z', G, L) + P('M1 4V9L4 10M14 4V9L11 10', L, 'none', 2), r2: P('M5 1H10V15H5Z', G, L) + P('M1 11V6H3M14 11V6H12', L, 'none', 2),
  r3: P('M2 1H6L9 15H5Z', G, L) + P('M9 5H15M11 2L8 5L11 8', L, 'none', 2), r4: P('M9 1H13L10 15H6Z', G, L) + P('M0 5H6M4 2L7 5L4 8', L, 'none', 2),
  r5: P('M5 2H10L14 14H1Z', G, L), r6: P('M1 2H14L10 13H5Z', G, L), r7: P('M5 1H10V4L14 9H1L5 4Z', G, W) + P('M1 9H14V14H1Z', G, L),
  r8: P('M6 1H14V9H10V6H6Z', G, W) + P('M1 6H10V14H1Z', G, L), r9: P('M4 4L11 11M11 4L4 11', G, 'none', 2) + P('M1 4V1H4M11 1H14V4M14 11V14H11M4 14H1V11', L, 'none', 2),
  r10: P('M4 6L7 3H12V10L9 13H4ZM4 6H9V13M9 6L12 3M12 3V0M4 12L0 15', G, L), r11: P('M1 5L5 1H14V10L10 14H1Z', G, W) + P('M4 7L6 5H11V10L9 12H4Z', G, L)
};
```
FILE: app.js
```js
const glyph = name => `<svg viewBox="-0.5 -0.5 16 16" aria-hidden="true">${ICONS[name]}</svg>`;

// Spec words: "|" separator, "name+" icon with a corner menu, "name!" pressed, "v" drop arrow.
const TEXT = {
  tB: ['bold', 'B'], tI: ['ital', 'I'], tU: ['undl', 'U'], tSup: ['serif', 'x<sup>2</sup>'], tSub: ['serif', 'x<sub>2</sub>'],
  tBoth: ['serif', 'x<sup>2</sup>'], tGreek: ['serif', 'αβ'], tGrow: ['large', 'A'], tShrink: ['serif', 'A'], tColor: ['big', '<u>A</u>'], tText: ['big text-tool', 'T'],
  tX: ['axis', 'X'], tY: ['axis', 'Y'], tZ: ['axis', 'Z'], tAbc: ['tiny', 'abc'], tHome: ['tiny', 'NONE'], tG: ['mono', 'G'], tS: ['mono', 'S']
};
const select = (label, value, cls = '', pre = '') =>
  `<label class="combo ${cls}">${pre}<select aria-label="${label}"><option>${value}</option></select></label>`;
const COMBO = {
  cZoom: select('Zoom', '100%', 'zoom'),
  cFont: select('Font', 'Default: Arial', 'font', '<svg width="16" height="16" viewBox="0 0 16 16"><path d="M0 1H10V4H9L8 3H6V10H7V11H3V10H4V3H2L1 4H0Z" fill="#666"/><path d="M6 5H16V8H15L14 7H12V14H13V15H9V14H10V7H8L7 8H6Z" fill="#111"/></svg>'),
  cSize: select('Font size', '0'), cWidth: select('Line width', '0'), cHatch: select('Border width', '0'), cLayer: select('Tilt', '10'),
  cStyle: select('Line style', '', '', '<svg width="34" height="16"><path d="M0 8.500H32" stroke="#000"/></svg>'),
  cShape: select('Shape', '', '', '<svg width="34" height="16"><rect x=".5" y="1.500" width="32" height="13" fill="#fff" stroke="#000"/></svg>')
};
function item(word) {
  if (word === '|') return '<span class="sep"></span>';
  if (word === 'v') return '<button class="arrow" aria-label="More"></button>';
  if (COMBO[word]) return COMBO[word];
  const name = word.replace(/[+!]/g, '');
  const cls = word.endsWith('+') ? 'corner' : word.endsWith('!') ? 'on' : '';
  if (TEXT[name]) return `<button class="${TEXT[name][0]}"><span>${TEXT[name][1]}</span></button>`;
  return `<button class="${cls}" aria-label="${name}">${glyph(name)}</button>`;
}
const toolbar = (spec, cls = '') =>
  `<div class="toolbar ${cls}"><span class="grip"></span>${spec.split(' ').map(item).join('')}<span class="end"></span></div>`;
const put = (id, html) => { document.getElementById(id).innerHTML = html; };

put('row-standard', toolbar('newDoc newFolder newBook newExcel newGraph newMatrix newFunc+ newLayout newNotes newDigit | open openTpl openXls save saveTpl | wizard imp1 impN | batch run | cZoom | print slide layoutV movie | edit winTop winWave | tree | explorer! results script! gear | addCol')
  + toolbar('sumCol sumRow sortAZ | rank | stat1 stat2 stat3 | filter filterOff filterGo')
  + toolbar('tX tY tZ errBar tAbc tHome | tG tS | first prev next last'));
put('row-format', toolbar('cut copy paste')
  + toolbar('cFont cSize tB tI tU tSup tSub tBoth tGreek tGrow tShrink align+ valign+ tColor v')
  + toolbar('fill v palette v pen v bulb cStyle cWidth cShape cHatch hatch v dotGrid+ cellGrid')
  + toolbar('db1 db2 db3 db4 db5 db6')
  + toolbar('mMark mClear | spread cross2 | lock'));
put('row-plot', toolbar('pLine+ pDots+ pLineDot+ pBar+ pBox+ pErr+ pArea+ pPolar+ pCandle+ p3d')
  + toolbar('g3a+ | g3b+ g3c+ g3d+ g3e g3f')
  + toolbar('m1 m2 | m3 m4 m5 | m6')
  + toolbar('r1 r2 r3 r4 r5 r6 r7 r8 r9 r10 r11 cLayer', 'push'));
put('dock-tools', toolbar('pointer! zoomIn zoomOut reader selector+ range mask+ dataRect+ dots tText arrowLine+ line+ rectTool+ hand formula+ graphTool+ rescale cube')
  + toolbar('lineW legend bracket scale clock table'));
put('dock-right', toolbar('surf axes3 | lay1 lay2 lay4 lay6 | ax1 ax2 ax3 ax4 ax5 ax6')
  + toolbar('al1 al2 | al3 al4 | al5 al6 | al7 al8 | al9 al10 | al11 al12 | al13 al14'));

// Project Explorer rows
const graphIcon = (size, sel) => `<svg width="${size}" height="${size}" viewBox="0 0 16 16"><path d="M2 2H16V16H2Z" fill="#000"/><path d="M0 0H14V14H0Z" fill="#fff"/><path d="M2.500 1.500H12.500V11.500H2.500Z" fill="#00f0f0" stroke="#f00"/><path d="M5.500 9V7M7 4.500H9M9 3.500H11M5 5.500H6M10 6.500H12" stroke="#000"/><path d="M0.500 2V12" stroke="#f00" stroke-dasharray="1 1"/><path d="M2 13.500H13" stroke="#000" stroke-dasharray="1 1"/>${sel ? '<path d="M.5.5H14.500V14.500H.5Z" fill="none" stroke="#f0f"/>' : ''}</svg>`;
const bookIcon = '<svg width="16" height="16" viewBox="0 0 16 16"><path d="M2 2H16V16H2Z" fill="#000"/><path d="M0 0H14V14H0Z" fill="#fff"/><path d="M0 4.500H14M0 11.500H14" stroke="#00006a"/><path d="M0 7.500H14M0 9.500H14" stroke="#0d0"/><path d="M4.500 0V14M9.500 0V14" stroke="#00006a"/><path d="M1 1.500H13" stroke="#f00" stroke-dasharray="2 2"/></svg>';
let rows = `<tr><td><span>${bookIcon}Book1</span></td><td>Workb</td></tr>`;
for (let n = 1; n <= 61; n += 2) rows += `<tr class="${n === 1 ? 'sel' : ''}"><td><span>${graphIcon(16, n === 1)}${n}-${n + 1}</span></td><td>Graph</td></tr>`;
put('files', rows);

// Child windows
const winIcon = '<svg width="20" height="20" viewBox="0 0 20 20"><path d="M2 2H20V20H2Z"/><path d="M.5.5H17.500V17.500H.5Z" fill="#fff" stroke="#000"/><path d="M2 2H16V15H2Z" fill="#00f0f0"/><path d="M3.500 2V15M2 8.500H16" stroke="#f00"/><path d="M5 6.500H8M7 5.500H10M10 4.500H12M12 3.500H14M6 12.500H9M8 10.500H12" stroke="#000"/><path d="M9 12.500H14" stroke="#f0f"/><path d="M2 15.500H16" stroke="#f00" stroke-width="2" stroke-dasharray="2 1"/></svg>';
const btn = (label, d, cls = '') => `<button class="${cls}" aria-label="${label}"><svg width="20" height="18" viewBox="0 0 20 18" fill="#f4f4f4" stroke="#555c70" stroke-linejoin="round">${d}</svg></button>`;
const controls = hot =>
  btn('Minimize', '<rect x="1.500" y="8.500" width="17" height="5" rx="1"/>', hot)
  + btn('Maximize', '<path d="M2.500 1.500H17.500V15.500H2.500ZM7 5.500V11.500H13V5.500Z" fill-rule="evenodd"/>')
  + btn('Close', '<path d="M2 2.500L4 1H6L10 5L14 1H16L18 2.500V4L13.500 8.500L18 13V14.500L16 16H14L10 12L6 16H4L2 14.500V13L6.500 8.500L2 4Z"/>');
const at = k => `left:${Math.floor(394.5 + 32.5 * k) - 342}px;top:${Math.floor(169.5 + 32.5 * k) - 118}px`;

function chart(o) {
  let s = '';
  const ticks = (o.max - o.min) / o.step, yOf = i => Math.round(o.y0 + i * o.dy) + 0.5;
  for (let i = 0; i <= ticks + 0.01; i++) {
    s += `<path d="M73 ${yOf(i)}H78"/><text class="tick" x="69" y="${yOf(i) + 2}" text-anchor="end">${(o.max - i * o.step).toFixed(o.digits)}</text>`;
    if (yOf(i + 0.5) < 249) s += `<path d="M75 ${yOf(i + 0.5)}H78"/>`;
  }
  for (let i = 0; i <= 6; i++) {
    const x = Math.round(98 + i * 250 / 6) - 0.5;
    s += `<path d="M${x} 249V253M${x + 21} 249V251"/><text class="tick" x="${x}" y="263" text-anchor="middle">${8 + i}</text>`;
  }
  const curve = (pts, c) => `<polyline points="${pts}" fill="none" stroke="${c}" vector-effect="non-scaling-stroke"/>`;
  return `<svg class="page" fill="none" stroke="#000" role="img" aria-label="${o.name}">
    <g shape-rendering="crispEdges"><path d="M77.500 35V250M75 249.500H368"/>${s.replace(/<text/g, '<text stroke="none" fill="#000"')}</g>
    <svg x="98" y="${o.top}" width="250" height="${o.h}" viewBox="${o.box}" preserveAspectRatio="none" overflow="visible" shape-rendering="crispEdges">${curve(o.black, '#000')}${curve(o.red, '#f00')}</svg>
    <rect x="309.500" y="11.500" width="${o.lw}" height="30" fill="#fff"/><path d="M316 19.500H342"/><path d="M316 33.500H342" stroke="#f00"/>
    <g stroke="none" fill="#000"><text x="345" y="24">${o.name}(上)</text><text x="345" y="38">${o.name}(下)</text>
    <text x="222" y="282" text-anchor="middle">波长 (µm)</text><text transform="translate(47 141) rotate(-90)" text-anchor="middle">${o.name}(上)</text></g></svg>`;
}
const chart1 = chart({
  name: 'D-1-2', max: 0.9, min: 0.64, step: 0.02, digits: 2, y0: 42, dy: 15.33, lw: 90, top: 42, h: 199, box: '413 363 700 598',
  black: '413,428 414,415 415,445 418,393 420,410 422,440 424,500 426,570 428,600 430,640 433,635 436,670 439,685 442,655 446,690 448,692 451,670 455,650 458,665 463,637 468,670 472,645 476,630 479,655 482,640 485,570 489,585 493,600 497,640 502,665 506,660 508,660 511,690 514,695 520,695 525,704 530,698 535,702 540,695 544,709 549,700 555,698 562,700 566,690 568,675 572,665 574,625 579,600 583,545 588,525 594,508 598,510 604,487 610,493 614,475 619,483 625,467 633,460 640,445 650,433 660,437 690,438 705,441 715,436 730,432 743,424 750,430 770,427 790,425 800,420 806,412 810,420 825,417 840,413 846,420 852,405 860,395 868,390 874,397 880,391 895,386 903,393 910,388 918,393 925,410 932,430 938,443 945,420 950,406 956,415 965,420 973,428 980,400 984,393 990,420 998,430 1008,440 1013,420 1018,405 1025,412 1034,447 1040,430 1045,398 1050,440 1056,495 1060,480 1065,430 1069,398 1073,430 1077,500 1082,513 1086,480 1092,467 1096,467 1098,520 1102,600 1104,607 1108,575 1113,567',
  red: '413,460 415,468 418,417 420,450 422,500 426,550 428,610 431,640 434,670 436,700 439,728 443,710 448,748 452,735 455,722 458,740 463,708 469,742 474,715 480,730 485,655 489,675 493,720 498,770 506,790 511,820 520,835 525,850 530,848 540,855 545,870 551,855 558,858 563,855 567,835 573,810 577,745 582,685 588,645 594,635 599,645 605,628 612,610 620,615 626,590 631,577 638,545 646,515 655,500 665,490 690,475 700,477 710,468 725,460 743,453 750,462 762,455 780,450 795,453 806,445 818,450 835,443 842,442 847,460 852,440 862,425 872,433 880,424 896,428 905,437 915,442 921,450 925,480 932,513 938,515 944,525 950,470 958,460 966,470 975,490 980,490 987,465 995,475 1003,480 1010,492 1018,468 1023,490 1029,525 1035,505 1042,495 1045,520 1048,600 1052,665 1056,640 1062,590 1066,540 1069,520 1073,560 1077,660 1082,680 1086,600 1092,590 1096,610 1098,700 1101,920 1104,930 1107,860 1110,810 1113,792'
});
const chart63 = chart({
  name: 'D-13-3', max: 4, min: 0.4, step: 0.2, digits: 1, y0: 35, dy: 11.89, lw: 97, top: 35, h: 214, box: '348 238 739 642',
  black: '350,802 360,812 368,820 378,826 388,822 405,821 415,822 420,818 428,812 434,820 445,823 480,823 487,826 492,823 510,823 518,818 528,808 545,803 555,800 600,799 620,796 700,796 720,794 840,793 850,791 880,791 890,794 900,798 910,793 925,797 940,801 955,796 990,795 1000,788 1010,790 1018,780 1028,775 1037,790 1044,785 1050,765 1056,778 1065,782 1070,785 1074,730 1076,620 1079,615 1082,690 1084,745 1087,778',
  red: '350,802 362,818 370,830 380,832 390,829 415,829 428,817 433,828 450,832 487,835 510,832 520,823 530,810 545,806 600,799 630,796 720,794 850,791 882,788 888,794 902,800 915,792 940,802 963,794 990,793 998,785 1008,790 1014,775 1022,748 1028,745 1034,768 1042,775 1050,760 1058,768 1070,768 1073,625 1075,312 1078,292 1080,510 1084,672 1087,728'
});

const win = (title, k, body, cls = '', hot = '') =>
  `<section class="win ${cls}" style="${at(k)}"><header>${winIcon}<h3>${title}</h3>${controls(hot)}</header><div class="client">${body}</div></section>`;
const layer = '<button class="layer">1</button>';

const cells = [['meta', 'D-1-4(上)', 'D-1-4(上)'], ['meta', '', ''], ['meta', '', ''], ['', '', '0.86'], ['', '', '0.85'], ['', '', '0.85'], ['', '', '0.85']];
while (cells.length < 16) cells.push(['', '', '']);
const sheet = `<div class="sheet"><div class="sheet-view"><table><thead><tr><th></th><th>C4(Y)</th><th>C5(Y)</th></tr></thead><tbody>${
  cells.map(([c, a, b]) => `<tr class="${c}"><th></th><td>${a}</td><td class="${c ? '' : 'num'}">${b}</td></tr>`).join('')
}</tbody></table></div><div class="sheet-nav"><button aria-label="Previous sheet"><svg width="6" height="10"><path d="M6 0V10L0 5Z" fill="#555"/></svg></button><button aria-label="Next sheet"><svg width="6" height="10"><path d="M0 0V10L6 5Z" fill="#555"/></svg></button><svg width="40" height="20"><path d="M2 0L9 20H40V0Z" fill="#fff" stroke="#000"/></svg></div></div><div class="vscroll"><span class="up"></span><div class="thumb"></div></div>`;

let wins = win('', -1, sheet, 'book');
for (let g = 50; g <= 63; g++) {
  const k = g - 49, a = 99 + 2 * (g - 50);
  const body = g < 52 ? '' : (g === 63 ? chart63 : '<svg class="page"></svg>') + layer;
  wins += win(`Graph${g} - ${a}-${a + 1}`, k, body, '', g === 59 ? 'hot' : '');
}
wins += win('Graph64 - 127-128', -1, '') + win('Graph1 - 1-2', 0, chart1 + layer, 'active');
put('mdi', wins);
```
